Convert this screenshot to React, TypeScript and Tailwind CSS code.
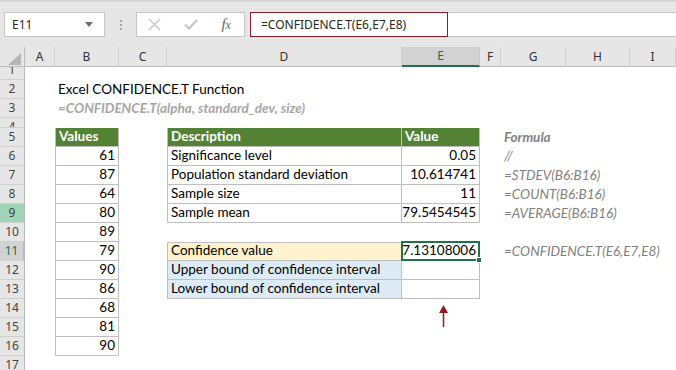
import type { ReactNode } from 'react';
import clsx from 'clsx';

const COLS = ['A', 'B', 'C', 'D', 'E', 'F', 'G', 'H', 'I'];
const ROWS = Array.from({ length: 17 }, (_, i) => i + 1);

type Cell = { text?: ReactNode; className?: string; selected?: boolean };

const line = 'border-[#bfbfbf]';
const tb = `border-r border-b ${line}`;
const num = 'justify-end pr-[3px]';
const note = 'italic text-[#7f7f7f]';
const head = 'bg-[#548235] text-white font-bold';

const values = [61, 87, 64, 80, 89, 79, 90, 86, 68, 81, 90];

const cells: Record<string, Cell> = {
  B2: { text: 'Excel CONFIDENCE.T Function' },
  B3: {
    text: '=CONFIDENCE.T(alpha, standard_dev, size)',
    className: 'italic font-bold text-[#a6a6a6]',
  },
  B5: { text: 'Values', className: `${head} ${tb} border-l` },
  D5: { text: 'Description', className: `${head} ${tb} border-l` },
  E5: { text: 'Value', className: `${head} ${tb}` },
  G5: { text: 'Formula', className: `${note} font-bold` },
  D6: { text: 'Significance level', className: `${tb} border-l` },
  E6: { text: '0.05', className: `${tb} ${num}` },
  G6: { text: '//', className: note },
  D7: { text: 'Population standard deviation', className: `${tb} border-l` },
  E7: { text: '10.614741', className: `${tb} ${num}` },
  G7: { text: '=STDEV(B6:B16)', className: note },
  D8: { text: 'Sample size', className: `${tb} border-l` },
  E8: { text: '11', className: `${tb} ${num}` },
  G8: { text: '=COUNT(B6:B16)', className: note },
  D9: { text: 'Sample mean', className: `${tb} border-l` },
  E9: { text: '79.5454545', className: `${tb} ${num}` },
  G9: { text: '=AVERAGE(B6:B16)', className: note },
  D11: { text: 'Confidence value', className: `${tb} border-l border-t bg-[#fff2cc]` },
  E11: { text: '7.13108006', className: `${tb} border-t ${num}`, selected: true },
  G11: { text: '=CONFIDENCE.T(E6,E7,E8)', className: note },
  D12: { text: 'Upper bound of confidence interval', className: `${tb} border-l bg-[#ddebf7]` },
  E12: { className: tb },
  D13: { text: 'Lower bound of confidence interval', className: `${tb} border-l bg-[#ddebf7]` },
  E13: { className: tb },
};
values.forEach((v, i) => {
  cells[`B${i + 6}`] = { text: v, className: `${tb} border-l ${num}` };
});

function Toolbar() {
  return (
    <div className="flex h-[47px] items-start border-t-2 border-[#d5d5d5] bg-[#e6e6e6] pl-[4px] pt-[10px] font-['Noto_Sans',sans-serif] text-[12px] text-[#262626]">
      <div className="flex h-[25px] w-[101px] items-center justify-between border border-[#c6c6c6] bg-white pl-[7px] pr-[11px]">
        <span>E11</span>
        <svg width="8" height="5" viewBox="0 0 8 5">
          <path d="M0 0 L8 0 L4 5 Z" fill="#6d6d6d" />
        </svg>
      </div>
      <div className="ml-[15px] mt-[8px] flex flex-col gap-[2px]">
        <span className="h-[2px] w-[2px] bg-[#a8a8a8]" />
        <span className="h-[2px] w-[2px] bg-[#a8a8a8]" />
        <span className="h-[2px] w-[2px] bg-[#a8a8a8]" />
      </div>
      <div className="ml-[14px] flex h-[25px] w-[109px] items-center border border-[#c6c6c6] bg-white">
        <span className="flex w-[36px] justify-center">
          <svg width="13" height="13" viewBox="0 0 13 13">
            <path d="M1 1 L12 12 M12 1 L1 12" stroke="#c3c3c3" strokeWidth="1.4" />
          </svg>
        </span>
        <span className="flex w-[36px] justify-center">
          <svg width="14" height="11" viewBox="0 0 14 11">
            <path d="M1 5.5 L5 9.5 L13 1" stroke="#c3c3c3" strokeWidth="2" fill="none" />
          </svg>
        </span>
        <span className="flex w-[36px] justify-center font-['Liberation_Serif',serif] text-[15px] italic leading-none text-[#666]">
          f<span className="relative top-[2px] text-[12px]">x</span>
        </span>
      </div>
      <div className="ml-[5px] flex h-[25px] flex-1 bg-white">
        <div className="flex h-full w-[198px] items-center border border-[#8e1b28] pl-[10px]">
          =CONFIDENCE.T(E6,E7,E8)
        </div>
        <div className="h-full flex-1 border-y border-[#c6c6c6]" />
      </div>
    </div>
  );
}

function RowHead({ r }: { r: number }) {
  return (
    <div
      className={clsx(
        "flex min-w-0 justify-center overflow-hidden border-b border-r border-[#cfcfcf] border-r-[#b9b9b9] font-['Noto_Sans',sans-serif] text-[12px] leading-[18px]",
        r === 1 ? 'items-end' : r === 4 ? 'items-start leading-[12px]' : 'items-center',
        r === 9 && 'bg-[#9fd5b7] text-[#444]',
        r === 11 ? 'border-r-2 border-r-[#217346] bg-[#d2d2d2] text-[#217346]' : r !== 9 && 'bg-[#e6e6e6] text-[#444]',
      )}
    >
      {r}
    </div>
  );
}

export default function App() {
  return (
    <div className="relative h-[370px] w-[676px] overflow-hidden bg-white">
      <Toolbar />
      <div className="grid grid-cols-[25px_30px_64px_48px_235px_78px_21px_65px_64px_1fr] grid-rows-[20px_13px_19px_19px_10px_repeat(13,19px)] text-black">
        <div className="relative border-b border-r border-[#bcbcbc] bg-[#e6e6e6]">
          <svg className="absolute bottom-[1px] right-[3px]" width="13" height="12" viewBox="0 0 13 12">
            <path d="M13 0 L13 12 L0 12 Z" fill="#b5b5b5" />
          </svg>
        </div>
        {COLS.map((c) => (
          <div
            key={c}
            className={clsx(
              "flex min-w-0 items-center justify-center border-r font-['Noto_Sans',sans-serif] text-[12px]",
              c === 'E'
                ? 'border-b-2 border-b-[#217346] border-r-[#c6c6c6] bg-[#d2d2d2] text-[#217346]'
                : 'border-b border-b-[#bcbcbc] border-r-[#cfcfcf] bg-[#e6e6e6] text-[#333]',
            )}
          >
            {c}
          </div>
        ))}
        {ROWS.map((r) => (
          <div key={r} className="contents">
            <RowHead r={r} />
            {COLS.map((c) => {
              const cell = cells[`${c}${r}`];
              return (
                <div
                  key={c}
                  className={clsx(
                    "relative flex min-w-0 items-end whitespace-nowrap pb-[1px] pl-[3px] font-['Lato',sans-serif] text-[13.5px] leading-[17px]",
                    cell?.className,
                  )}
                >
                  {cell?.text}
                  {cell?.selected && (
                    <div className="absolute -bottom-[1px] -left-[1px] -right-[1px] -top-[2px] z-10 border-2 border-[#217346]">
                      <span className="absolute -bottom-[4px] -right-[4px] h-[6px] w-[6px] border border-white bg-[#217346]" />
                    </div>
                  )}
                </div>
              );
            })}
          </div>
        ))}
      </div>
      <svg className="absolute left-[439px] top-[305px]" width="9" height="22" viewBox="0 0 9 22">
        <path d="M4.5 0 L9 8 L0 8 Z" fill="#8e1b28" />
        <path d="M4.5 6 L4.5 22" stroke="#8e1b28" strokeWidth="1.5" />
      </svg>
    </div>
  );
}
